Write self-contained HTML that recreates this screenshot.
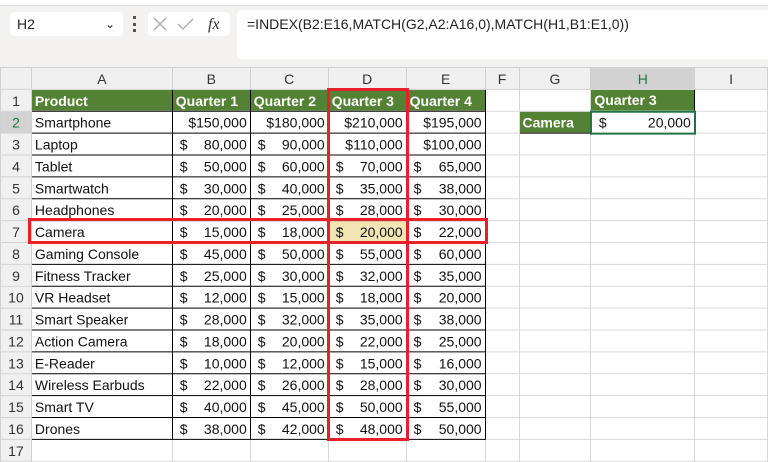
<!DOCTYPE html>
<html><head><meta charset="utf-8"><style>
*{box-sizing:border-box;margin:0;padding:0}
body{width:768px;height:457px;overflow:hidden;background:#fff;font-family:"Liberation Sans",sans-serif;position:relative}
.fb{position:absolute;left:0;top:0;width:768px;height:67px;background:#f3f2f1}
.topw{position:absolute;left:0;top:0;width:768px;height:6px;background:#fff;border-bottom:1px solid #e1dfdd}
.nb{position:absolute;left:10px;top:12px;width:113px;height:24px;background:#fff;border-radius:4px;font-size:14px;line-height:24px;padding-left:7px;color:#222}
.fx{position:absolute;left:148px;top:12px;width:82px;height:24px;background:#fff;border-radius:4px}
.fe{position:absolute;left:237px;top:10px;width:531px;height:49px;background:#fff;border-radius:5px 0 0 5px;font-size:14px;padding:6px 0 0 10px;color:#222}
table{position:absolute;left:0;top:67px;border-collapse:collapse;table-layout:fixed;font-size:14px;transform:scaleY(0.9943);transform-origin:0 0}
td{height:22px;border:1px solid #d9d9d9;padding:0 3px;white-space:nowrap;overflow:hidden;color:#111}
tr.h td{height:22px;background:#f0f0f0;text-align:center;color:#333;border-color:#d0d0d0}
td.r{background:#f0f0f0;text-align:center;color:#333;border-color:#d0d0d0;padding:0}
.g{background:#548235!important;color:#fff!important;font-weight:bold}
.d{border:1px solid #000}
.m{display:flex;justify-content:space-between;padding-left:4px}
.rt{text-align:right}
.hl{background:#f2e5b4}
.red{position:absolute;border:3px solid #e8202a}
</style></head><body>
<div class="fb"></div><div class="topw"></div>
<div class="nb">H2<span style="position:absolute;right:8px;top:0;font-size:12px">&#8964;</span></div>
<div style="position:absolute;left:133px;top:16px;width:3px;height:16px;border-left:3px dotted #555"></div>
<div class="fx"><svg width="82" height="24"><path d="M6 6l12 12M18 6L6 18" stroke="#aaa" stroke-width="1.3" fill="none"/><path d="M30 12l5 5 10-10" stroke="#aaa" stroke-width="1.3" fill="none"/><text x="60" y="17" font-family="Liberation Serif" font-style="italic" font-size="16" fill="#333">fx</text></svg></div>
<div class="fe">=INDEX(B2:E16,MATCH(G2,A2:A16,0),MATCH(H1,B1:E1,0))</div>
<table>
<colgroup><col style="width:31px"><col style="width:141px"><col style="width:78px"><col style="width:78px"><col style="width:78px"><col style="width:79px"><col style="width:34px"><col style="width:72px"><col style="width:104px"><col style="width:73px"></colgroup>
<tr class="h"><td></td><td>A</td><td>B</td><td>C</td><td>D</td><td>E</td><td>F</td><td>G</td><td style="background:#d2d2d2;color:#217346">H</td><td>I</td></tr>
<tr><td class="r">1</td><td class="g d">Product</td><td class="g d">Quarter 1</td><td class="g d">Quarter 2</td><td class="g d">Quarter 3</td><td class="g d">Quarter 4</td><td></td><td></td><td class="g d">Quarter 3</td><td></td></tr>
<tr><td class="r" style="background:#d2d2d2;color:#217346">2</td><td class="d">Smartphone</td><td class="d rt">$150,000</td><td class="d rt">$180,000</td><td class="d rt">$210,000</td><td class="d rt">$195,000</td><td></td><td class="g d">Camera</td><td style="border:2px solid #217346"><div class="m"><span>$</span><span>20,000</span></div></td><td></td></tr>
<tr><td class="r">3</td><td class="d">Laptop</td><td class="d"><div class="m"><span>$</span><span>80,000</span></div></td><td class="d"><div class="m"><span>$</span><span>90,000</span></div></td><td class="d rt">$110,000</td><td class="d rt">$100,000</td><td></td><td></td><td></td><td></td></tr>
<tr><td class="r">4</td><td class="d">Tablet</td><td class="d"><div class="m"><span>$</span><span>50,000</span></div></td><td class="d"><div class="m"><span>$</span><span>60,000</span></div></td><td class="d"><div class="m"><span>$</span><span>70,000</span></div></td><td class="d"><div class="m"><span>$</span><span>65,000</span></div></td><td></td><td></td><td></td><td></td></tr>
<tr><td class="r">5</td><td class="d">Smartwatch</td><td class="d"><div class="m"><span>$</span><span>30,000</span></div></td><td class="d"><div class="m"><span>$</span><span>40,000</span></div></td><td class="d"><div class="m"><span>$</span><span>35,000</span></div></td><td class="d"><div class="m"><span>$</span><span>38,000</span></div></td><td></td><td></td><td></td><td></td></tr>
<tr><td class="r">6</td><td class="d">Headphones</td><td class="d"><div class="m"><span>$</span><span>20,000</span></div></td><td class="d"><div class="m"><span>$</span><span>25,000</span></div></td><td class="d"><div class="m"><span>$</span><span>28,000</span></div></td><td class="d"><div class="m"><span>$</span><span>30,000</span></div></td><td></td><td></td><td></td><td></td></tr>
<tr><td class="r">7</td><td class="d">Camera</td><td class="d"><div class="m"><span>$</span><span>15,000</span></div></td><td class="d"><div class="m"><span>$</span><span>18,000</span></div></td><td class="d hl"><div class="m"><span>$</span><span>20,000</span></div></td><td class="d"><div class="m"><span>$</span><span>22,000</span></div></td><td></td><td></td><td></td><td></td></tr>
<tr><td class="r">8</td><td class="d">Gaming Console</td><td class="d"><div class="m"><span>$</span><span>45,000</span></div></td><td class="d"><div class="m"><span>$</span><span>50,000</span></div></td><td class="d"><div class="m"><span>$</span><span>55,000</span></div></td><td class="d"><div class="m"><span>$</span><span>60,000</span></div></td><td></td><td></td><td></td><td></td></tr>
<tr><td class="r">9</td><td class="d">Fitness Tracker</td><td class="d"><div class="m"><span>$</span><span>25,000</span></div></td><td class="d"><div class="m"><span>$</span><span>30,000</span></div></td><td class="d"><div class="m"><span>$</span><span>32,000</span></div></td><td class="d"><div class="m"><span>$</span><span>35,000</span></div></td><td></td><td></td><td></td><td></td></tr>
<tr><td class="r">10</td><td class="d">VR Headset</td><td class="d"><div class="m"><span>$</span><span>12,000</span></div></td><td class="d"><div class="m"><span>$</span><span>15,000</span></div></td><td class="d"><div class="m"><span>$</span><span>18,000</span></div></td><td class="d"><div class="m"><span>$</span><span>20,000</span></div></td><td></td><td></td><td></td><td></td></tr>
<tr><td class="r">11</td><td class="d">Smart Speaker</td><td class="d"><div class="m"><span>$</span><span>28,000</span></div></td><td class="d"><div class="m"><span>$</span><span>32,000</span></div></td><td class="d"><div class="m"><span>$</span><span>35,000</span></div></td><td class="d"><div class="m"><span>$</span><span>38,000</span></div></td><td></td><td></td><td></td><td></td></tr>
<tr><td class="r">12</td><td class="d">Action Camera</td><td class="d"><div class="m"><span>$</span><span>18,000</span></div></td><td class="d"><div class="m"><span>$</span><span>20,000</span></div></td><td class="d"><div class="m"><span>$</span><span>22,000</span></div></td><td class="d"><div class="m"><span>$</span><span>25,000</span></div></td><td></td><td></td><td></td><td></td></tr>
<tr><td class="r">13</td><td class="d">E-Reader</td><td class="d"><div class="m"><span>$</span><span>10,000</span></div></td><td class="d"><div class="m"><span>$</span><span>12,000</span></div></td><td class="d"><div class="m"><span>$</span><span>15,000</span></div></td><td class="d"><div class="m"><span>$</span><span>16,000</span></div></td><td></td><td></td><td></td><td></td></tr>
<tr><td class="r">14</td><td class="d">Wireless Earbuds</td><td class="d"><div class="m"><span>$</span><span>22,000</span></div></td><td class="d"><div class="m"><span>$</span><span>26,000</span></div></td><td class="d"><div class="m"><span>$</span><span>28,000</span></div></td><td class="d"><div class="m"><span>$</span><span>30,000</span></div></td><td></td><td></td><td></td><td></td></tr>
<tr><td class="r">15</td><td class="d">Smart TV</td><td class="d"><div class="m"><span>$</span><span>40,000</span></div></td><td class="d"><div class="m"><span>$</span><span>45,000</span></div></td><td class="d"><div class="m"><span>$</span><span>50,000</span></div></td><td class="d"><div class="m"><span>$</span><span>55,000</span></div></td><td></td><td></td><td></td><td></td></tr>
<tr><td class="r">16</td><td class="d">Drones</td><td class="d"><div class="m"><span>$</span><span>38,000</span></div></td><td class="d"><div class="m"><span>$</span><span>42,000</span></div></td><td class="d"><div class="m"><span>$</span><span>48,000</span></div></td><td class="d"><div class="m"><span>$</span><span>50,000</span></div></td><td></td><td></td><td></td><td></td></tr>
<tr><td class="r">17</td><td></td><td></td><td></td><td></td><td></td><td></td><td></td><td></td><td></td></tr>
</table>
<div class="red" style="left:327px;top:88px;width:82px;height:353px"></div>
<div class="red" style="left:28px;top:218px;width:460px;height:26px"></div>
</body></html>
